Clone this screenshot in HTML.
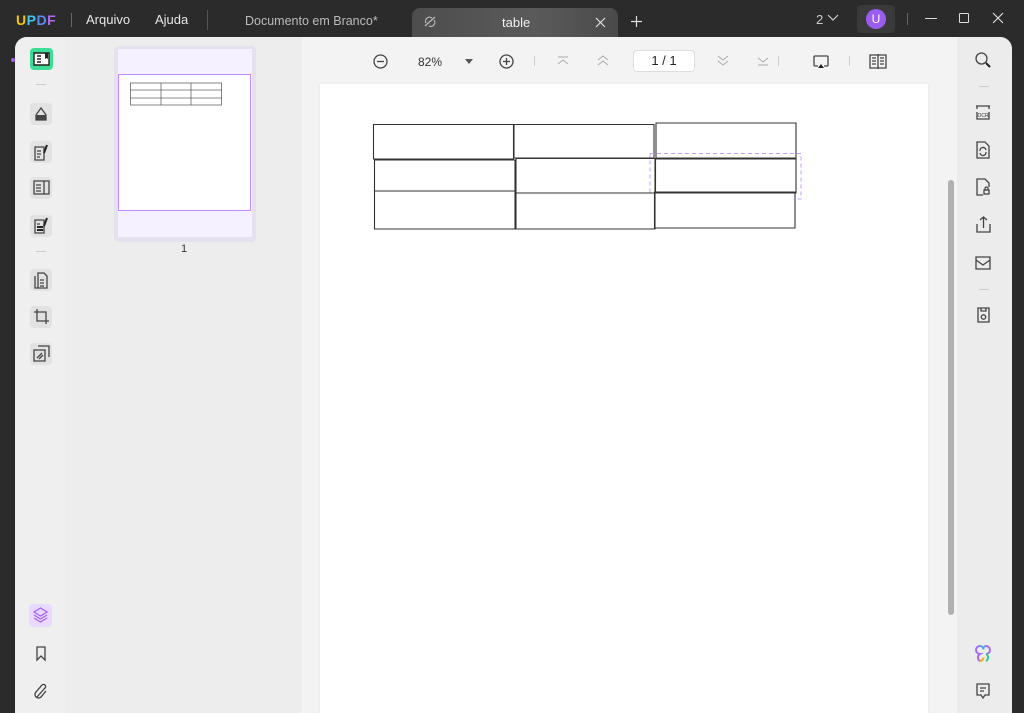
<!DOCTYPE html>
<html><head><meta charset="utf-8"><style>
*{margin:0;padding:0;box-sizing:border-box}
body{width:1024px;height:713px;background:#2b2b2b;font-family:"Liberation Sans",sans-serif;position:relative;overflow:hidden}
.a{position:absolute}
.t{color:#e6e6e6;font-size:13px}
svg{position:absolute;overflow:visible}
.ic{stroke:#444;fill:none;stroke-width:1.3}
.ib{position:absolute;width:22px;height:22px;background:#e2e2e2;border-radius:4px}
</style></head><body>
<!-- title bar -->
<div class="a" style="left:16px;top:12px;font-weight:bold;font-size:14px;letter-spacing:0.5px"><span style="color:#f5c211">U</span><span style="color:#3fc7f0">P</span><span style="color:#5b8cf5">D</span><span style="color:#b36bf5">F</span></div>
<div class="a" style="left:71px;top:13px;width:1px;height:14px;background:#666"></div>
<div class="a t" style="left:86px;top:12px">Arquivo</div>
<div class="a t" style="left:155px;top:12px">Ajuda</div>
<div class="a" style="left:207px;top:10px;width:1px;height:20px;background:#555"></div>
<div class="a" style="left:245px;top:14px;color:#bbb;font-size:12.5px">Documento em Branco*</div>
<div class="a" style="left:412px;top:8px;width:206px;height:30px;background:linear-gradient(90deg,#4d4d4d,#5a5a5a 60%,#4a4a4a);border-radius:8px 8px 0 0"></div>
<svg style="left:423px;top:16px" width="14" height="12"><path d="M2 10 L12 1 M3 7 a4 4 0 0 1 6 -5 M11 4 a4 4 0 0 1 -5 6" stroke="#bbb" stroke-width="1.2" fill="none"/></svg>
<div class="a" style="left:502px;top:15px;color:#f0f0f0;font-size:13px">table</div>
<svg style="left:596px;top:18px" width="9" height="9"><path d="M0 0L9 9M9 0L0 9" stroke="#ddd" stroke-width="1.2"/></svg>
<svg style="left:631px;top:16px" width="11" height="11"><path d="M5.5 0V11M0 5.5H11" stroke="#ddd" stroke-width="1.2"/></svg>
<div class="a t" style="left:816px;top:12px;color:#ccc">2</div>
<svg style="left:828px;top:15px" width="10" height="6"><path d="M0 0L5 5L10 0" stroke="#ccc" fill="none" stroke-width="1.2"/></svg>
<div class="a" style="left:857px;top:5px;width:38px;height:28px;background:#3a3a3a;border-radius:4px"></div>
<div class="a" style="left:866px;top:9px;width:20px;height:20px;border-radius:50%;background:#9b5cf0;color:#fff;font-size:12px;text-align:center;line-height:20px">U</div>
<div class="a" style="left:907px;top:13px;width:1px;height:12px;background:#666"></div>
<div class="a" style="left:925px;top:18px;width:12px;height:1px;background:#ddd"></div>
<div class="a" style="left:959px;top:13px;width:10px;height:10px;border:1.2px solid #ddd;border-radius:1px"></div>
<svg style="left:993px;top:13px" width="10" height="10"><path d="M0 0L10 10M10 0L0 10" stroke="#ddd" stroke-width="1.2"/></svg>
<!-- main frame -->
<div class="a" style="left:15px;top:37px;width:997px;height:676px;background:#f0f0f0;border-radius:12px 12px 0 0"></div>
<!-- left toolbar -->
<div class="a" style="left:15px;top:37px;width:50px;height:676px;background:#efefef;border-radius:12px 0 0 0"></div>
<div class="a" style="left:11px;top:58px;width:4px;height:4px;border-radius:50%;background:#9b5cf0"></div>
<div class="a" style="left:30px;top:48px;width:23px;height:22px;background:#3ddc97;border-radius:4px"></div>
<svg style="left:33px;top:51px" width="17" height="16"><path d="M1 2H16V14H1Z M4 5H8M4 8H8M4 11H8" stroke="#222" stroke-width="1.4" fill="#fff"/><path d="M12 2V8L13.5 7L15 8V2" fill="#222"/></svg>
<div class="a" style="left:36px;top:84px;width:10px;height:1px;background:#ccc"></div>
<div class="ib" style="left:30px;top:103px"></div>
<svg style="left:34px;top:106px" width="14" height="16"><path d="M2 9L7 2L12 9V14H2Z" class="ic" fill="#fff"/><path d="M2 9H12V14H2Z" fill="#444"/></svg>
<div class="ib" style="left:30px;top:141px"></div>
<svg style="left:34px;top:144px" width="15" height="17"><path d="M1 3H10V16H1Z M3 7H7M3 10H7M3 13H6" class="ic"/><path d="M13 1L10 9" stroke="#222" stroke-width="2"/></svg>
<div class="ib" style="left:30px;top:177px"></div>
<svg style="left:33px;top:180px" width="17" height="15"><path d="M1 1H16V14H1Z M11 1V14 M3 5H8M3 8H8M3 11H8" class="ic"/></svg>
<div class="ib" style="left:30px;top:215px"></div>
<svg style="left:34px;top:217px" width="15" height="17"><path d="M1 3H10V16H1Z M3 7H6" class="ic"/><path d="M3 10H9M3 13H9" stroke="#222" stroke-width="2"/><path d="M13 1L10 9" stroke="#222" stroke-width="2"/></svg>
<div class="a" style="left:36px;top:251px;width:10px;height:1px;background:#ccc"></div>
<div class="ib" style="left:30px;top:269px"></div>
<svg style="left:34px;top:272px" width="15" height="17"><path d="M4 1H10L13 4V16H4Z M1 4V16H4 M6 8H10M6 11H10M6 14H10" class="ic"/></svg>
<div class="ib" style="left:30px;top:306px"></div>
<svg style="left:33px;top:308px" width="17" height="17"><path d="M4 1V13H16 M1 4H13V16" class="ic" stroke-width="1.6"/></svg>
<div class="ib" style="left:30px;top:343px"></div>
<svg style="left:33px;top:345px" width="17" height="17"><path d="M5 1H16V12 M1 5H12V16H1Z M4 13L9 8M6 14L10 10" class="ic"/></svg>
<div class="a" style="left:29px;top:604px;width:23px;height:23px;background:#ead9ff;border-radius:4px"></div>
<svg style="left:33px;top:607px" width="15" height="17"><path d="M7.5 1L14 5L7.5 9L1 5Z M1 8L7.5 12L14 8 M1 11L7.5 15L14 11" stroke="#a066f0" stroke-width="1.3" fill="none"/></svg>
<svg style="left:36px;top:646px" width="10" height="15"><path d="M1 1H9V14L5 10L1 14Z" class="ic"/></svg>
<svg style="left:34px;top:682px" width="14" height="17"><path d="M3 15L11 6a2 2 0 0 0 -3 -3L2 10a3.5 3.5 0 0 0 5 5L12 9" class="ic"/></svg>
<!-- thumbnail panel -->
<div class="a" style="left:65px;top:37px;width:237px;height:676px;background:#ededed"></div>
<div class="a" style="left:114px;top:46px;width:142px;height:196px;background:#e6e1f0;border-radius:4px"></div>
<div class="a" style="left:118px;top:49px;width:134px;height:188px;background:#f6f1ff"></div>
<div class="a" style="left:118px;top:74px;width:133px;height:137px;background:#fff;border:1px solid #c38bff"></div>
<svg style="left:130px;top:82px" width="93" height="24"><g stroke="#666" stroke-width="0.8" fill="none"><rect x="0.5" y="1" width="91" height="22"/><path d="M0 8H92M0 16H92M31 1V23M61 1V23"/></g></svg>
<div class="a" style="left:181px;top:243px;font-size:11px;color:#333">1</div>
<!-- main viewer -->
<div class="a" style="left:302px;top:37px;width:655px;height:676px;background:#f3f3f3"></div>
<div class="a" style="left:320px;top:84px;width:608px;height:629px;background:#fff;box-shadow:0 0 3px rgba(0,0,0,0.08)"></div>
<svg style="left:373px;top:54px" width="15" height="15"><circle cx="7.5" cy="7.5" r="6.5" class="ic"/><path d="M4 7.5H11" class="ic"/></svg>
<div class="a" style="left:418px;top:55px;font-size:12px;color:#333">82%</div>
<svg style="left:465px;top:59px" width="8" height="5"><path d="M0 0H8L4 5Z" fill="#555"/></svg>
<svg style="left:499px;top:54px" width="15" height="15"><circle cx="7.5" cy="7.5" r="6.5" class="ic"/><path d="M4 7.5H11M7.5 4V11" class="ic"/></svg>
<div class="a" style="left:534px;top:56px;width:1px;height:10px;background:#ccc"></div>
<svg style="left:557px;top:56px" width="12" height="10" ><path d="M1 1H11M1 8L6 4L11 8" stroke="#aaa" fill="none"/></svg>
<svg style="left:597px;top:55px" width="12" height="11"><path d="M1 5L6 1L11 5M1 10L6 6L11 10" stroke="#aaa" fill="none"/></svg>
<div class="a" style="left:633px;top:50px;width:62px;height:22px;background:#fff;border:1px solid #ddd;border-radius:4px;text-align:center;font-size:13px;line-height:20px;color:#222">1 / 1</div>
<svg style="left:717px;top:55px" width="12" height="11"><path d="M1 1L6 5L11 1M1 6L6 10L11 6" stroke="#aaa" fill="none"/></svg>
<svg style="left:757px;top:56px" width="12" height="10"><path d="M1 9H11M1 2L6 6L11 2" stroke="#aaa" fill="none"/></svg>
<div class="a" style="left:778px;top:56px;width:1px;height:10px;background:#ccc"></div>
<svg style="left:813px;top:55px" width="16" height="14"><path d="M5 11H2a1 1 0 0 1 -1 -1V2a1 1 0 0 1 1 -1H14a1 1 0 0 1 1 1V10a1 1 0 0 1 -1 1H11" class="ic"/><path d="M5 13L8 9L11 13Z" fill="#222"/></svg>
<div class="a" style="left:849px;top:56px;width:1px;height:10px;background:#ccc"></div>
<svg style="left:869px;top:54px" width="18" height="15"><path d="M1 1H17V14H1Z M9 0V15 M3 4H7M3 7H7M3 10H7M11 4H15M11 7H15M11 10H15" class="ic"/></svg>
<!-- table -->
<svg style="left:370px;top:120px" width="436" height="112"><g fill="none" stroke="#333" stroke-width="1.1">
<path d="M3.5 4.5H143.5V39H3.5Z M144 4.5H284V38H144Z M286 3H426V38H286Z"/>
<path d="M4.5 40H145V71H4.5Z M146 38.5H285V73H146Z M285.5 39H426V73H285.5Z"/>
<path d="M4.5 71H145V109H4.5Z M146 73H285V109H146Z M284.5 72H425V108H284.5Z"/>
</g><path d="M280 33.5H431V79H425 M280 33.5V73" stroke="#c4a0f5" stroke-dasharray="4 3" fill="none"/></svg>
<!-- scrollbar -->
<div class="a" style="left:948px;top:180px;width:6px;height:435px;background:#b0b0b0;border-radius:3px"></div>
<!-- right toolbar -->
<div class="a" style="left:957px;top:37px;width:55px;height:676px;background:#ececec;border-radius:0 12px 0 0"></div>
<svg style="left:975px;top:52px" width="16" height="16"><circle cx="6.5" cy="6.5" r="5.5" class="ic"/><path d="M11 11L15 15" stroke="#222" stroke-width="2"/></svg>
<div class="a" style="left:979px;top:86px;width:10px;height:1px;background:#ccc"></div>
<svg style="left:975px;top:104px" width="16" height="16"><path d="M1 2H15M2 2V5M14 2V5M2 8V15H14V8" class="ic"/><text x="8" y="13" font-size="5" text-anchor="middle" fill="#333" font-family="Liberation Sans">OCR</text></svg>
<svg style="left:976px;top:141px" width="14" height="18"><path d="M1 1H9L13 5V17H1Z" class="ic"/><path d="M4 10a3 3 0 0 1 6 -1M10 11a3 3 0 0 1 -6 1" class="ic"/></svg>
<svg style="left:976px;top:178px" width="14" height="18"><path d="M7 17H1V1H9L13 5V9" class="ic"/><rect x="8" y="12" width="5" height="4" class="ic"/><path d="M9 12V10.5a1.5 1.5 0 0 1 3 0V12" class="ic"/></svg>
<svg style="left:976px;top:216px" width="15" height="17"><path d="M1 8V16H14V8 M7.5 12V1 M4 4L7.5 1L11 4" class="ic"/></svg>
<svg style="left:975px;top:256px" width="16" height="14"><path d="M1 1H15V13H1Z M1 4L8 9L15 4" class="ic"/></svg>
<div class="a" style="left:979px;top:289px;width:10px;height:1px;background:#ccc"></div>
<svg style="left:977px;top:307px" width="13" height="16"><path d="M1 1H12V15H1Z M4 1V4H9V1" class="ic"/><circle cx="6.5" cy="10" r="2.2" class="ic"/></svg>
<svg style="left:975px;top:645px" width="16" height="17"><path d="M5 1a4 4 0 0 0 0 8a4 4 0 0 0 0 7 M11 1a4 4 0 0 1 0 8" stroke="#a66cf5" stroke-width="2" fill="none"/><path d="M5 16a3.5 3.5 0 0 0 3.5 -3.5" stroke="#f5a623" stroke-width="2" fill="none"/><path d="M11 9a4 4 0 0 1 0 7" stroke="#2fcf8c" stroke-width="2" fill="none"/><path d="M5 1a3.5 3.5 0 0 1 3.5 3.5 M11 1a3.5 3.5 0 0 0 -3 3" stroke="#5aa0f5" stroke-width="2" fill="none"/></svg>
<svg style="left:976px;top:683px" width="14" height="16"><path d="M1 1H13V12H9L7 15L5 12H1Z M4 5H10M4 8H8" class="ic"/></svg>
</body></html>
